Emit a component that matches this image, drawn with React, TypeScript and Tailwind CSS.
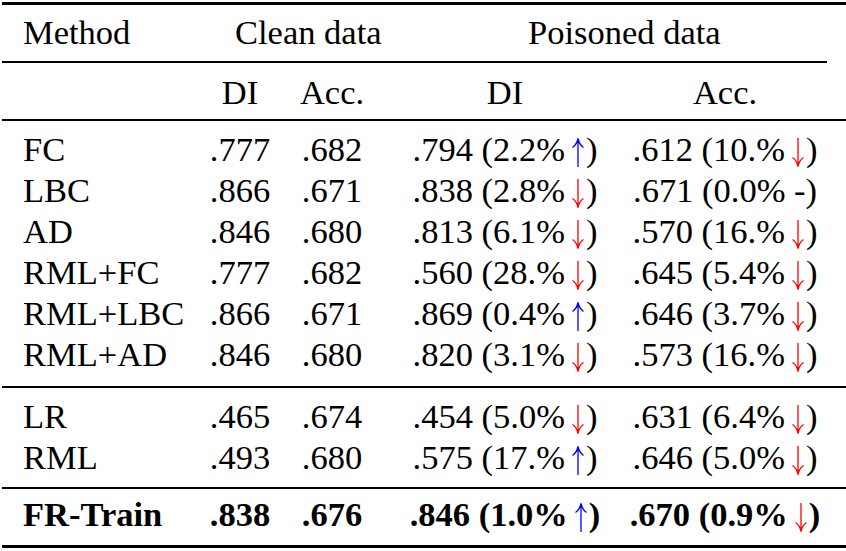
import type { ReactNode } from 'react';

type Trend = 'up' | 'down' | 'flat';

interface Cell {
  value: string;
  pct: string;
  trend: Trend;
}

interface Row {
  method: string;
  di: string;
  acc: string;
  pDi: Cell;
  pAcc: Cell;
}

const groupA: Row[] = [
  { method: 'FC', di: '.777', acc: '.682', pDi: { value: '.794', pct: '2.2%', trend: 'up' }, pAcc: { value: '.612', pct: '10.%', trend: 'down' } },
  { method: 'LBC', di: '.866', acc: '.671', pDi: { value: '.838', pct: '2.8%', trend: 'down' }, pAcc: { value: '.671', pct: '0.0%', trend: 'flat' } },
  { method: 'AD', di: '.846', acc: '.680', pDi: { value: '.813', pct: '6.1%', trend: 'down' }, pAcc: { value: '.570', pct: '16.%', trend: 'down' } },
  { method: 'RML+FC', di: '.777', acc: '.682', pDi: { value: '.560', pct: '28.%', trend: 'down' }, pAcc: { value: '.645', pct: '5.4%', trend: 'down' } },
  { method: 'RML+LBC', di: '.866', acc: '.671', pDi: { value: '.869', pct: '0.4%', trend: 'up' }, pAcc: { value: '.646', pct: '3.7%', trend: 'down' } },
  { method: 'RML+AD', di: '.846', acc: '.680', pDi: { value: '.820', pct: '3.1%', trend: 'down' }, pAcc: { value: '.573', pct: '16.%', trend: 'down' } },
];

const groupB: Row[] = [
  { method: 'LR', di: '.465', acc: '.674', pDi: { value: '.454', pct: '5.0%', trend: 'down' }, pAcc: { value: '.631', pct: '6.4%', trend: 'down' } },
  { method: 'RML', di: '.493', acc: '.680', pDi: { value: '.575', pct: '17.%', trend: 'up' }, pAcc: { value: '.646', pct: '5.0%', trend: 'down' } },
];

const ours: Row = {
  method: 'FR-Train',
  di: '.838',
  acc: '.676',
  pDi: { value: '.846', pct: '1.0%', trend: 'up' },
  pAcc: { value: '.670', pct: '0.9%', trend: 'down' },
};

const cols = 'grid grid-cols-[198px_80px_104px_242px_198px] h-[41px] items-center';

function Arrow({ dir }: { dir: 'up' | 'down' }) {
  const color = dir === 'up' ? '#0000ff' : '#ff0000';
  return (
    <svg width="14" height="31" viewBox="0 0 14 31" className="inline-block align-[-7px] ml-[6px] mr-[1px]">
      {dir === 'up' ? (
        <path d="M7 2 V30 M1.5 10.5 C4.5 8.5 6.1 6 7 1.5 C7.9 6 9.5 8.5 12.5 10.5" stroke={color} strokeWidth="1.3" fill="none" />
      ) : (
        <path d="M7 1 V29 M1.5 20.5 C4.5 22.5 6.1 25 7 29.5 C7.9 25 9.5 22.5 12.5 20.5" stroke={color} strokeWidth="1.3" fill="none" />
      )}
    </svg>
  );
}

function Change({ cell }: { cell: Cell }) {
  return (
    <span className="whitespace-nowrap">
      {cell.value} ({cell.pct}
      {cell.trend === 'flat' ? ' -' : <Arrow dir={cell.trend} />})
    </span>
  );
}

function DataRow({ row, bold = false }: { row: Row; bold?: boolean }) {
  return (
    <div className={`${cols} ${bold ? 'font-bold' : ''}`}>
      <span className="pl-[21px]">{row.method}</span>
      <span className="text-center">{row.di}</span>
      <span className="text-center">{row.acc}</span>
      <span className="text-center">
        <Change cell={row.pDi} />
      </span>
      <span className="text-center">
        <Change cell={row.pAcc} />
      </span>
    </div>
  );
}

function Group({ children, className }: { children: ReactNode; className: string }) {
  return <div className={className}>{children}</div>;
}

export default function App() {
  return (
    <div className="w-[846px] h-[551px] bg-white pt-[2px] pl-[2px] text-black font-['Liberation_Serif','Times_New_Roman',serif] text-[34.5px] leading-[41px]">
      {/* header */}
      <div className="border-t-[3px] border-black pt-[7px]">
        <div className="flex h-[41px] items-center">
          <span className="w-[233px] pl-[21px]">Method</span>
          <span className="w-[293px]">Clean data</span>
          <span>Poisoned data</span>
        </div>
      </div>
      <div className="mt-[8px] w-[825px] h-[2px] bg-black" />
      <div className="pt-[9px] pb-[6px]">
        <div className={cols}>
          <span />
          <span className="text-center">DI</span>
          <span className="text-center">Acc.</span>
          <span className="text-center">DI</span>
          <span className="text-center">Acc.</span>
        </div>
      </div>

      <Group className="border-t-2 border-black pt-[8px] pb-[11px]">
        {groupA.map(r => (
          <DataRow key={r.method} row={r} />
        ))}
      </Group>
      <Group className="border-t-2 border-black pt-[8px] pb-[9px]">
        {groupB.map(r => (
          <DataRow key={r.method} row={r} />
        ))}
      </Group>
      <Group className="border-t-2 border-black pt-[5px] pb-[10px] border-b-[3px]">
        <DataRow row={ours} bold />
      </Group>
    </div>
  );
}
